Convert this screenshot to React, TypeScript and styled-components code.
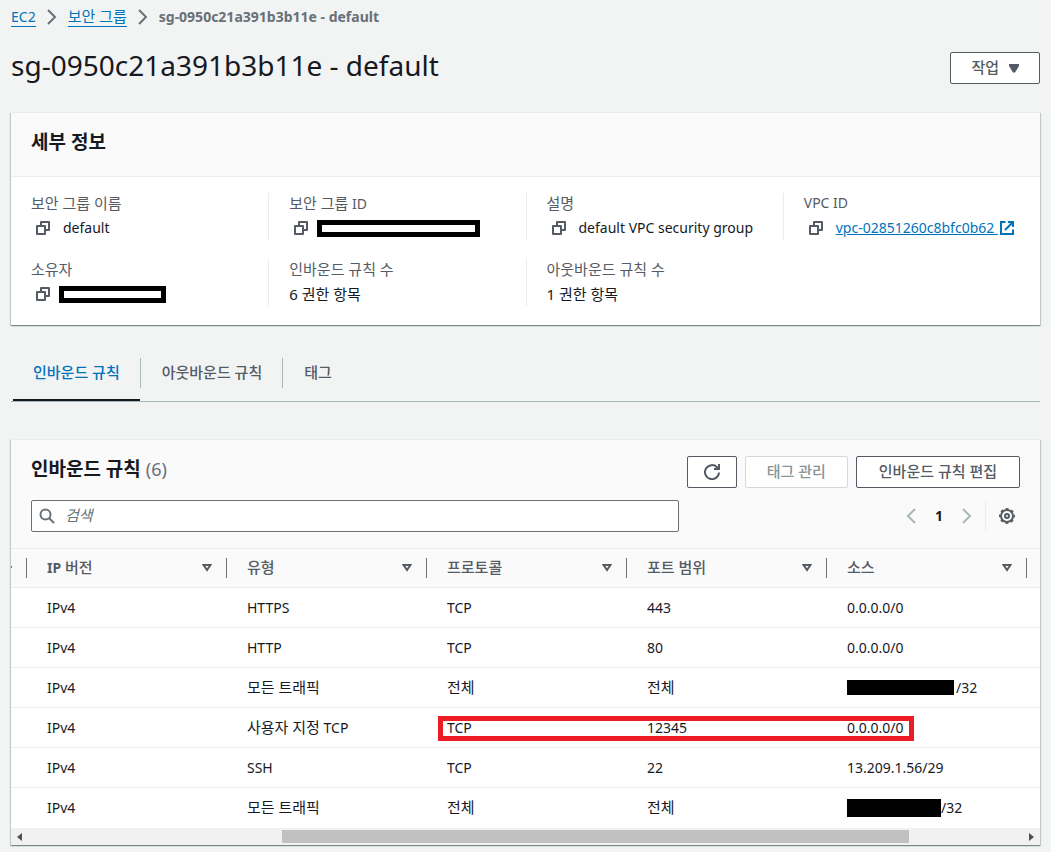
import React from 'react';
import styled, { createGlobalStyle, css } from 'styled-components';

const GlobalStyle = createGlobalStyle`
  *, *::before, *::after { box-sizing: border-box; }
  body {
    margin: 0;
    background: #f2f3f3;
    color: #16191f;
    font-family: "Noto Sans", "Noto Sans CJK KR", sans-serif;
    font-size: 14px;
    line-height: 22px;
  }
  button, input { font: inherit; color: inherit; }
  h1, h2, dl, dd, dt, ol { margin: 0; padding: 0; }
`;

const Page = styled.main`
  padding: 6px 11px;
`;

/* Hangul is set one step larger than the Latin text around it. */
const Ko = styled.span`
  font-size: 15px;
`;

const Breadcrumbs = styled.ol`
  display: flex;
  align-items: center;
  gap: 11px;
  list-style: none;
  color: #687078;
  li { display: flex; align-items: center; gap: 11px; }
`;

const Link = styled.a<{ $plain?: boolean }>`
  color: #0073bb;
  ${(p) =>
    p.$plain
      ? css`
          text-decoration: underline;
        `
      : css`
          text-decoration: none;
          border-bottom: 1px solid #0073bb;
          line-height: 19px;
        `}
`;

const Current = styled.span`
  font-weight: 700;
`;

const TitleBar = styled.header`
  display: flex;
  align-items: flex-start;
  justify-content: space-between;
  margin-top: 19px;
`;

const PageTitle = styled.h1`
  font-size: 28px;
  line-height: 36px;
  font-weight: 400;
`;

const Button = styled.button<{ $pad?: number }>`
  display: inline-flex;
  align-items: center;
  justify-content: center;
  gap: 10px;
  height: 32px;
  padding: 0 ${(p) => p.$pad ?? 20}px 2px;
  border: 1px solid #545b64;
  border-radius: 2px;
  background: #fff;
  color: #545b64;
  font-size: 15px;
  font-weight: 500;
  white-space: nowrap;
  svg { margin-top: 2px; }
  &:disabled { border-color: #d5dbdb; color: #879596; }
`;

const ActionSlot = styled.div`
  padding-top: 5px;
`;

const Card = styled.section`
  border-top: 1px solid #eaeded;
  background: #fff;
  box-shadow: 0 1px 1px 0 rgba(0, 28, 36, 0.3), 1px 1px 1px 0 rgba(0, 28, 36, 0.15),
    -1px 1px 1px 0 rgba(0, 28, 36, 0.15);
`;

const DetailCard = styled(Card)`
  margin-top: 28px;
`;

const DetailHeader = styled.div`
  padding: 17px 20px 22px;
  border-bottom: 1px solid #eaeded;
  background: #fafafa;
`;

const SectionTitle = styled.h2<{ $inset?: boolean }>`
  padding-top: ${(p) => (p.$inset ? 1 : 0)}px;
  font-size: 19px;
  line-height: 24px;
  font-weight: 700;
  span { color: #687078; font-size: 18px; font-weight: 400; }
`;

const DetailGrid = styled.dl`
  display: grid;
  grid-template-columns: repeat(4, 1fr);
  row-gap: 19px;
  padding: 16px 0 19px;
`;

const Detail = styled.div`
  padding-left: 20px;
  border-left: 1px solid #eaeded;
  &:nth-child(4n + 1) { border-left: 0; }
`;

const Label = styled.dt`
  height: 20px;
  color: #545b64;
  line-height: 20px;
`;

const Value = styled.dd<{ $tight?: boolean }>`
  display: flex;
  align-items: center;
  gap: ${(p) => (p.$tight ? 4 : 8)}px;
  height: 24px;
  margin-top: 3px;
  white-space: nowrap;
`;

const CopyButton = styled.button`
  display: flex;
  width: 24px;
  padding: 0 4px;
  border: 0;
  background: none;
  color: #545b64;
`;

const Redacted = styled.span<{ $w: number; $h: number; $hollow?: boolean }>`
  display: inline-block;
  width: ${(p) => p.$w}px;
  height: ${(p) => p.$h}px;
  border: 5px solid #000;
  background: ${(p) => (p.$hollow ? '#fff' : '#000')};
`;

const External = styled(Link)`
  svg { margin-left: 1px; vertical-align: -3px; }
`;

const Tabs = styled.div`
  display: flex;
  margin-top: 26px;
  padding-left: 2px;
  border-bottom: 1px solid #aab7b8;
`;

const Tab = styled.button<{ $active?: boolean }>`
  position: relative;
  height: 50px;
  padding: 0 20px 8px 22px;
  border: 0;
  background: none;
  color: ${(p) => (p.$active ? '#0073bb' : '#545b64')};
  font-size: 15px;
  font-weight: 500;
  &:first-child { padding-left: 20px; }
  &:not(:last-child)::before {
    content: '';
    position: absolute;
    top: 7px;
    right: -1px;
    height: 30px;
    border-right: 1px solid #aab7b8;
  }
  &::after {
    content: '';
    position: absolute;
    left: 0;
    right: 0;
    bottom: 0;
    height: 2px;
    background: ${(p) => (p.$active ? '#16191f' : 'transparent')};
  }
`;

const RulesCard = styled(Card)`
  margin-top: 37px;
`;

const RulesHeader = styled.div`
  padding: 16px 20px;
  background: #fafafa;
`;

const Row = styled.div`
  display: flex;
  align-items: flex-start;
  justify-content: space-between;
`;

const Toolbar = styled(Row)`
  margin-top: 12px;
`;

const Actions = styled.div`
  display: flex;
  gap: 8px;
`;

const Search = styled.label`
  display: flex;
  align-items: center;
  flex: 1;
  max-width: 648px;
  height: 32px;
  padding-left: 7px;
  gap: 10px;
  border: 1px solid #687078;
  border-radius: 2px;
  background: #fff;
  color: #687078;
  input {
    flex: 1;
    min-width: 0;
    border: 0;
    padding: 0 0 2px;
    outline: 0;
    background: none;
    font-size: 15px;
  }
  input::placeholder { color: #687078; font-style: italic; opacity: 1; }
`;

const Pager = styled.nav`
  display: flex;
  align-items: center;
`;

const PagerButton = styled.button<{ $muted?: boolean }>`
  display: flex;
  justify-content: center;
  width: 28px;
  padding: 0;
  border: 0;
  background: none;
  font-weight: 700;
  color: ${(p) => (p.$muted ? '#aab7b8' : '#16191f')};
`;

const Settings = styled.div`
  display: flex;
  align-items: center;
  height: 32px;
  margin-left: 4px;
  padding: 0 5px 0 13px;
  border-left: 1px solid #eaeded;
  button { display: flex; padding: 0; border: 0; background: none; color: #545b64; }
`;

const Table = styled.table`
  width: 100%;
  table-layout: fixed;
  border-collapse: separate;
  border-spacing: 0;
`;

const EdgeCol = styled.col<{ $w: number }>`
  width: ${(p) => p.$w}px;
`;

const HeadCell = styled.th`
  position: relative;
  height: 40px;
  padding: 0 15px 2px 20px;
  border-top: 1px solid #eaeded;
  border-bottom: 1px solid #eaeded;
  background: #fafafa;
  color: #545b64;
  font-size: 15px;
  font-weight: 500;
  text-align: left;
  &:not(:last-child)::after {
    content: '';
    position: absolute;
    right: 0;
    top: 9px;
    height: 20px;
    border-right: 1px solid #687078;
  }
  b { font-size: 14px; }
`;

const EdgeMark = styled.span`
  position: absolute;
  left: 0;
  top: 17px;
  width: 1px;
  height: 2px;
  background: #687078;
`;

const Cell = styled.td`
  position: relative;
  height: 40px;
  padding: 0 0 0 20px;
  border-bottom: 1px solid #eaeded;
  white-space: nowrap;
  tr:last-child > & { border-bottom-color: transparent; }
`;

const Masked = styled.span<{ $gap?: number }>`
  display: flex;
  align-items: center;
  gap: ${(p) => p.$gap ?? 0}px;
`;

const Highlight = styled.span`
  position: absolute;
  z-index: 1;
  top: 8px;
  left: 11px;
  width: calc(200% + 76px);
  height: 25px;
  border: 5px solid #ed1c24;
  pointer-events: none;
`;

const ScrollBar = styled.div`
  display: flex;
  align-items: center;
  height: 17px;
  background: #f1f1f1;
  color: #505050;
`;

const ScrollArrow = styled.span`
  display: flex;
  justify-content: center;
  width: 17px;
`;

const ScrollSpace = styled.span<{ $grow: number; $thumb?: boolean }>`
  flex: ${(p) => p.$grow} 1 0;
  height: 13px;
  background: ${(p) => (p.$thumb ? '#c1c1c1' : 'transparent')};
`;

const Chevron = ({ left }: { left?: boolean }) => (
  <svg width="10" height="16" viewBox="0 0 10 16" fill="none" stroke="currentColor" strokeWidth="2">
    <path d={left ? 'M9 1 2 8l7 7' : 'M1 1l7 7-7 7'} />
  </svg>
);

const CopyIcon = () => (
  <svg width="16" height="16" viewBox="0 0 16 16" fill="none" stroke="currentColor" strokeWidth="2" strokeLinejoin="round">
    <path d="M2 6h8v8H2z" />
    <path d="M6 6V2h8v8h-4" />
  </svg>
);

const ExternalIcon = () => (
  <svg width="16" height="16" viewBox="0 0 16 16" fill="none" stroke="currentColor" strokeWidth="2">
    <path d="M6.500 2H2v12h12V9.500M9 2h5v5M14 2 6 10" />
  </svg>
);

const RefreshIcon = () => (
  <svg width="16" height="16" viewBox="0 0 16 16" fill="none" stroke="currentColor" strokeWidth="2">
    <path d="M15 8.500A7 7 0 1 1 13 3.200L14.500 5" />
    <path d="M15 0v5h-5" />
    <path d="M12 5l3-3v3z" fill="currentColor" stroke="none" />
  </svg>
);

const SearchIcon = () => (
  <svg width="16" height="16" viewBox="0 0 16 16" fill="none" stroke="currentColor" strokeWidth="2">
    <circle cx="6.5" cy="6.5" r="5" />
    <path d="M10 10l5 5" />
  </svg>
);

const GearIcon = () => (
  <svg width="16" height="16" viewBox="0 0 16 16" fill="none" stroke="currentColor">
    <circle cx="8" cy="8" r="6" strokeWidth="2" />
    <circle cx="8" cy="8" r="7.2" strokeWidth="1.6" strokeDasharray="2.8 2.85" strokeDashoffset="1.4" />
    <circle cx="8" cy="8" r="2" strokeWidth="2" />
  </svg>
);

const SortIcon = () => (
  <svg width="10" height="8" viewBox="0 0 10 8" fill="none" stroke="currentColor" strokeWidth="2">
    <path d="M1.500 1h7L5 6z" />
  </svg>
);

const HeadInner = styled.span`
  display: flex;
  align-items: center;
  justify-content: space-between;
  svg { margin-top: 2px; }
`;

const columns: React.ReactNode[] = [
  <span key="ip"><b>IP</b> 버전</span>,
  '유형',
  '프로토콜',
  '포트 범위',
  '소스',
];

type Rule = { type: React.ReactNode; protocol: React.ReactNode; port: React.ReactNode; source: React.ReactNode; marked?: boolean };

const all = <Ko>전체</Ko>;
const allTraffic = <Ko>모든 트래픽</Ko>;

const rules: Rule[] = [
  { type: 'HTTPS', protocol: 'TCP', port: '443', source: '0.0.0.0/0' },
  { type: 'HTTP', protocol: 'TCP', port: '80', source: '0.0.0.0/0' },
  { type: allTraffic, protocol: all, port: all, source: <Masked $gap={2}><Redacted $w={107} $h={15} />/32</Masked> },
  { type: <><Ko>사용자 지정</Ko> TCP</>, protocol: 'TCP', port: '12345', source: '0.0.0.0/0', marked: true },
  { type: 'SSH', protocol: 'TCP', port: '22', source: '13.209.1.56/29' },
  { type: allTraffic, protocol: all, port: all, source: <Masked><Redacted $w={94} $h={18} />/32</Masked> },
];

const Copy = () => (
  <CopyButton aria-label="복사"><CopyIcon /></CopyButton>
);

export default function App() {
  return (
    <>
      <GlobalStyle />
      <Page>
        <nav>
          <Breadcrumbs>
            <li><Link href="#ec2">EC2</Link><Chevron /></li>
            <li><Link href="#groups"><Ko>보안 그룹</Ko></Link><Chevron /></li>
            <li><Current>sg-0950c21a391b3b11e - default</Current></li>
          </Breadcrumbs>
        </nav>
        <TitleBar>
          <PageTitle>sg-0950c21a391b3b11e - default</PageTitle>
          <ActionSlot>
            <Button>
              작업
              <svg width="10" height="9" viewBox="0 0 10 9" fill="currentColor"><path d="M0 0h10v2L6 8.500H4L0 2z" /></svg>
            </Button>
          </ActionSlot>
        </TitleBar>

        <DetailCard>
          <DetailHeader><SectionTitle>세부 정보</SectionTitle></DetailHeader>
          <DetailGrid>
            <Detail><Label><Ko>보안 그룹 이름</Ko></Label><Value><Copy />default</Value></Detail>
            <Detail><Label><Ko>보안 그룹</Ko> ID</Label><Value $tight><Copy /><Redacted $w={163} $h={17} $hollow /></Value></Detail>
            <Detail><Label><Ko>설명</Ko></Label><Value><Copy />default VPC security group</Value></Detail>
            <Detail>
              <Label>VPC ID</Label>
              <Value><Copy /><External href="#vpc" $plain>vpc-02851260c8bfc0b62 <ExternalIcon /></External></Value>
            </Detail>
            <Detail><Label><Ko>소유자</Ko></Label><Value $tight><Copy /><Redacted $w={107} $h={17} $hollow /></Value></Detail>
            <Detail><Label><Ko>인바운드 규칙 수</Ko></Label><Value><Ko>6 권한 항목</Ko></Value></Detail>
            <Detail><Label><Ko>아웃바운드 규칙 수</Ko></Label><Value><Ko>1 권한 항목</Ko></Value></Detail>
          </DetailGrid>
        </DetailCard>

        <Tabs role="tablist">
          <Tab role="tab" aria-selected="true" $active>인바운드 규칙</Tab>
          <Tab role="tab" aria-selected="false">아웃바운드 규칙</Tab>
          <Tab role="tab" aria-selected="false">태그</Tab>
        </Tabs>

        <RulesCard>
          <RulesHeader>
            <Row>
              <SectionTitle $inset>인바운드 규칙 <span>(6)</span></SectionTitle>
              <Actions>
                <Button $pad={16} aria-label="새로 고침"><RefreshIcon /></Button>
                <Button $pad={21} disabled>태그 관리</Button>
                <Button $pad={22}>인바운드 규칙 편집</Button>
              </Actions>
            </Row>
            <Toolbar>
              <Search>
                <SearchIcon />
                <input type="text" placeholder="검색" aria-label="검색" />
              </Search>
              <Pager>
                <PagerButton $muted aria-label="이전"><Chevron left /></PagerButton>
                <PagerButton>1</PagerButton>
                <PagerButton $muted aria-label="다음"><Chevron /></PagerButton>
                <Settings><button aria-label="설정"><GearIcon /></button></Settings>
              </Pager>
            </Toolbar>
          </RulesHeader>
          <Table>
            <colgroup>
              <EdgeCol $w={16} />
              {columns.map((_, i) => <col key={i} />)}
              <EdgeCol $w={13} />
            </colgroup>
            <thead>
              <tr>
                <HeadCell as="td"><EdgeMark /></HeadCell>
                {columns.map((c, i) => (
                  <HeadCell key={i} scope="col"><HeadInner>{c}<SortIcon /></HeadInner></HeadCell>
                ))}
                <HeadCell as="td" />
              </tr>
            </thead>
            <tbody>
              {rules.map((r, i) => (
                <tr key={i}>
                  <Cell />
                  <Cell>IPv4</Cell>
                  <Cell>{r.type}</Cell>
                  <Cell>{r.protocol}{r.marked && <Highlight />}</Cell>
                  <Cell>{r.port}</Cell>
                  <Cell>{r.source}</Cell>
                  <Cell />
                </tr>
              ))}
            </tbody>
          </Table>
          <ScrollBar>
            <ScrollArrow><svg width="5" height="8" viewBox="0 0 5 8"><path d="M5 0v8L0 4z" fill="currentColor" /></svg></ScrollArrow>
            <ScrollSpace $grow={254} />
            <ScrollSpace $grow={627} $thumb />
            <ScrollSpace $grow={114} />
            <ScrollArrow><svg width="5" height="8" viewBox="0 0 5 8"><path d="M0 0v8l5-4z" fill="currentColor" /></svg></ScrollArrow>
          </ScrollBar>
        </RulesCard>
      </Page>
    </>
  );
}
